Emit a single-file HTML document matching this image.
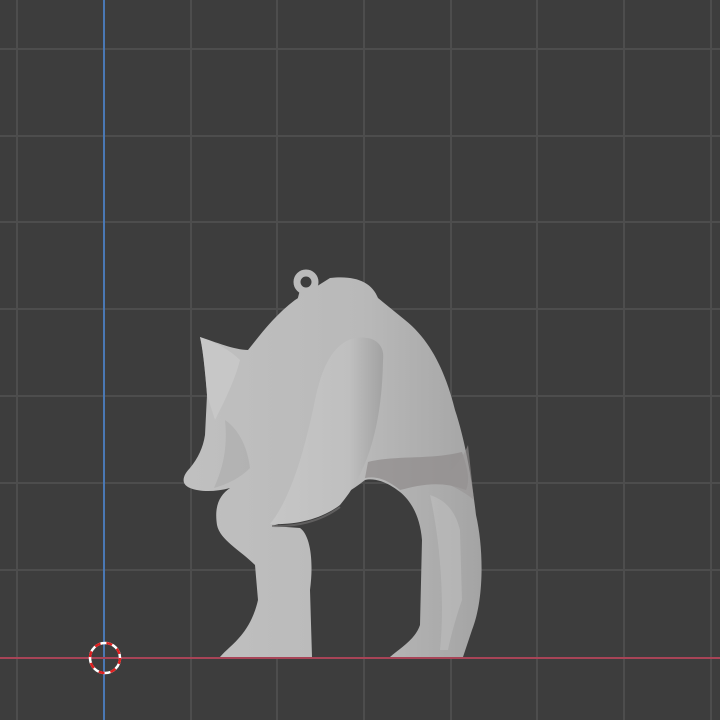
<!DOCTYPE html>
<html><head><meta charset="utf-8"><style>
html,body{margin:0;padding:0;background:#3d3d3d;width:720px;height:720px;overflow:hidden}
svg{display:block}
</style></head><body>
<svg width="720" height="720" viewBox="0 0 720 720" xmlns="http://www.w3.org/2000/svg">
<defs>
<linearGradient id="bg" x1="0" y1="0" x2="1" y2="0">
<stop offset="0" stop-color="#c0c0c0"/><stop offset="0.6" stop-color="#b9b9b9"/><stop offset="1" stop-color="#a4a4a4"/>
</linearGradient>
<linearGradient id="tg" x1="0" y1="0" x2="1" y2="0">
<stop offset="0" stop-color="#c6c6c6"/><stop offset="0.7" stop-color="#bfbfbf"/><stop offset="1" stop-color="#a2a2a2"/>
</linearGradient>
</defs>
<rect width="720" height="720" fill="#3d3d3d"/>
<g stroke="#4d4d4d" stroke-width="2">
<line x1="17" y1="0" x2="17" y2="720"/><line x1="191" y1="0" x2="191" y2="720"/>
<line x1="277" y1="0" x2="277" y2="720"/><line x1="364" y1="0" x2="364" y2="720"/>
<line x1="451" y1="0" x2="451" y2="720"/><line x1="537" y1="0" x2="537" y2="720"/>
<line x1="624" y1="0" x2="624" y2="720"/><line x1="711" y1="0" x2="711" y2="720"/>
<line x1="0" y1="49" x2="720" y2="49"/><line x1="0" y1="136" x2="720" y2="136"/>
<line x1="0" y1="222" x2="720" y2="222"/><line x1="0" y1="309" x2="720" y2="309"/>
<line x1="0" y1="396" x2="720" y2="396"/><line x1="0" y1="483" x2="720" y2="483"/>
<line x1="0" y1="570" x2="720" y2="570"/>
</g>
<line x1="104" y1="0" x2="104" y2="720" stroke="#4a78b4" stroke-width="2"/>
<line x1="0" y1="658" x2="720" y2="658" stroke="#a84457" stroke-width="2"/>
<circle cx="306" cy="282" r="9" fill="none" stroke="#bbbbbb" stroke-width="7"/>
<path d="M300,290 L296,305 L312,300 L312,290 Z" fill="#bbbbbb"/>
<path fill="url(#bg)" d="M295,300 L330,278 C355,275 372,282 378,298 L405,320 C430,340 445,370 455,410 C465,440 472,480 476,515 C484,550 484,600 472,630 L463,657 L390,657 C400,648 415,640 420,625 L422,540 C420,515 410,500 400,492 C385,480 372,478 365,480 C340,500 300,518 272,526 L300,528 C310,535 314,560 310,590 L312,657 L220,657 C230,645 250,635 258,600 L255,565 C240,550 220,540 217,525 C214,505 220,495 230,488 C215,492 200,492 190,488 C180,484 183,475 190,468 C198,458 203,448 205,435 L207,395 C205,370 203,350 200,337 C215,342 235,350 248,350 C260,335 275,315 295,300 Z"/>
<path fill="#8e8a8a" opacity="0.7" d="M368,462 C395,455 430,460 462,452 C468,470 470,480 466,490 C440,480 420,485 400,490 C385,478 375,476 365,478 Z"/>
<path fill="#979595" opacity="0.6" d="M440,480 C452,470 462,460 468,445 L474,500 C465,492 452,486 440,480 Z"/>
<path fill="#cdcdcd" opacity="0.6" d="M200,337 C215,342 230,350 240,360 C235,380 225,400 215,420 L207,395 C205,370 203,350 200,337 Z"/>
<path fill="#a2a2a2" opacity="0.4" d="M225,420 C240,430 248,450 250,468 C240,478 228,484 214,488 C222,470 228,450 225,420 Z"/>
<path fill="url(#tg)" d="M270,524 C290,500 305,450 315,400 C322,365 335,342 355,338 C375,335 385,345 383,360 C382,420 370,470 340,505 C320,520 295,525 270,524 Z"/>
<path fill="none" stroke="#6f6d6d" stroke-width="2" opacity="0.7" d="M272,526 C295,527 320,522 340,507"/>
<path fill="#c8c8c8" opacity="0.4" d="M430,495 C445,500 455,510 460,530 L462,600 C455,620 450,640 448,650 L440,650 C445,600 440,540 430,495 Z"/>
<circle cx="105" cy="658" r="15" fill="none" stroke="#ffffff" stroke-width="2.5"/>
<circle cx="105" cy="658" r="15" fill="none" stroke="#e02020" stroke-width="2.5" stroke-dasharray="6 6"/>
</svg>
</body></html>
